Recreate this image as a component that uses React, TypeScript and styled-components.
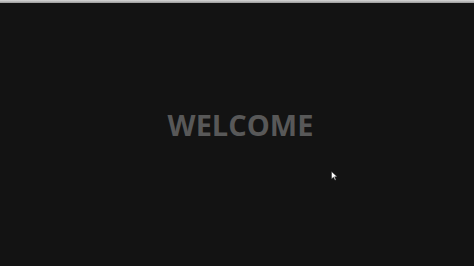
import styled, { createGlobalStyle } from 'styled-components';

const GlobalStyle = createGlobalStyle`
  html, body {
    margin: 0;
    padding: 0;
    background: #131313;
  }
`;

const Screen = styled.div`
  position: relative;
  width: 100vw;
  height: 100vh;
  box-sizing: border-box;
  background: #131313;
  display: flex;
  flex-direction: column;
`;

const TopEdge = styled.div`
  height: 3px;
  background: linear-gradient(#d8d8d8, #9a9a9a);
  flex-shrink: 0;
`;

const Stage = styled.div`
  flex: 1;
  display: flex;
  align-items: center;
  justify-content: center;
  padding: 0 0 20px 7px;
`;

const Title = styled.h1`
  margin: 0;
  font-family: 'Open Sans', 'Noto Sans', sans-serif;
  font-weight: 700;
  font-size: 29px;
  line-height: 1;
  color: #585858;
`;

const Pointer = styled.svg`
  position: absolute;
  left: 331px;
  top: 171px;
`;

export default function App() {
  return (
    <>
      <GlobalStyle />
      <Screen>
        <TopEdge />
        <Stage>
          <Title>WELCOME</Title>
        </Stage>
        <Pointer width="7" height="10" viewBox="0 0 7 10">
          <path d="M0.5 0.5 L0.5 8 L2.5 6.2 L4 9.3 L5 8.8 L3.6 5.8 L6.2 5.8 Z" fill="#ffffff" stroke="#222" strokeWidth="0.5" />
        </Pointer>
      </Screen>
    </>
  );
}
